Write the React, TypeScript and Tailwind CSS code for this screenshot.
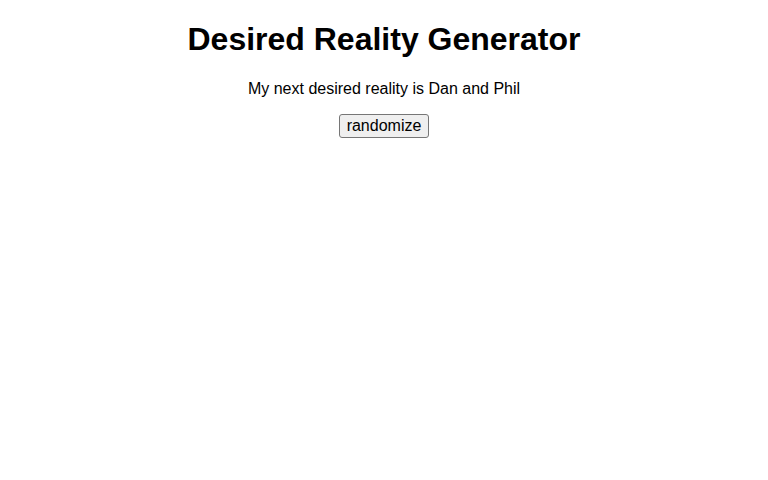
import React, { useState } from "react";

const realities = ["Dan and Phil", "Hogwarts", "Marvel", "Percy Jackson", "Haikyuu"];

export default function App() {
  const [index, setIndex] = useState(0);

  const randomize = () => {
    setIndex(Math.floor(Math.random() * realities.length));
  };

  return (
    <div
      className="text-center text-black bg-white min-h-screen"
      style={{ fontFamily: '"Liberation Sans", Arial, sans-serif' }}
    >
      <h1 className="text-[32px] font-bold leading-[37px] pt-[21px] mb-[22px]">
        Desired Reality Generator
      </h1>
      <p className="text-[16px] leading-[18px] mb-[16px]">
        My next desired reality is {realities[index]}
      </p>
      <button
        onClick={randomize}
        className="text-[16px] leading-[18px] bg-[#efefef] border border-[#767676] rounded-[3px] px-[7px] py-[2px] text-black"
      >
        randomize
      </button>
    </div>
  );
}
